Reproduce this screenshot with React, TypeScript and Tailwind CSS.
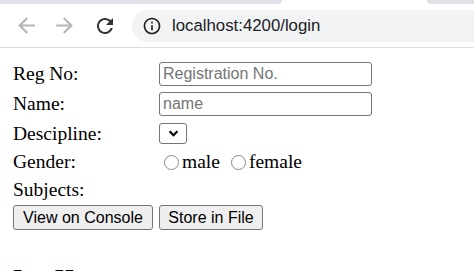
export default function App() {
  return (
    <div className="w-[474px] h-[271px] overflow-hidden bg-white">
      {/* tab strip */}
      <div className="flex h-[4px]">
        <div className="w-[282px] bg-[#dee1e6] rounded-br-[4px]" />
        <div className="w-[145px]" />
        <div className="flex-1 bg-[#dee1e6] rounded-bl-[4px]" />
      </div>

      {/* toolbar */}
      <div className="flex items-center h-[44px] border-b border-[#dadce0] pl-[14px] overflow-hidden">
        <svg viewBox="0 0 24 24" className="w-[25px] h-[25px] flex-none fill-[#b4b6b8]">
          <path d="M20 11H7.83l5.59-5.59L12 4l-8 8 8 8 1.41-1.41L7.83 13H20v-2z" />
        </svg>
        <svg viewBox="0 0 24 24" className="w-[25px] h-[25px] flex-none ml-[13px] fill-[#b4b6b8]">
          <path d="M4 11h12.17l-5.59-5.59L12 4l8 8-8 8-1.41-1.41L16.17 13H4v-2z" />
        </svg>
        <svg viewBox="0 0 24 24" className="w-[24px] h-[24px] flex-none ml-[16px] fill-[#303236]">
          <path d="M17.65 6.35C16.2 4.9 14.21 4 12 4c-4.42 0-7.99 3.58-7.99 8s3.57 8 7.99 8c3.73 0 6.84-2.55 7.730-6h-2.08c-.82 2.33-3.04 4-5.65 4-3.31 0-6-2.69-6-6s2.69-6 6-6c1.66 0 3.14.69 4.22 1.78L13 11h7V4l-2.35 2.35z" />
        </svg>
        <div className="flex items-center flex-none w-[360px] h-[32px] ml-[15px] rounded-full bg-[#f1f3f4] pl-[10px]">
          <svg viewBox="0 0 24 24" className="w-[20px] h-[20px] flex-none fill-[#202124]">
            <path d="M11 7h2v2h-2zm0 4h2v6h-2zm1-9C6.48 2 2 6.48 2 12s4.48 10 10 10 10-4.48 10-10S17.52 2 12 2zm0 18c-4.41 0-8-3.59-8-8s3.59-8 8-8 8 3.59 8 8-3.59 8-8 8z" />
          </svg>
          <span className="ml-[10px] text-[16.8px] text-[#202124] font-['Liberation_Sans',Arial,sans-serif]">
            localhost:4200/login
          </span>
        </div>
      </div>

      {/* page */}
      <div className="pl-[13px] pt-[14px] font-['Liberation_Serif','Times_New_Roman',serif] text-[19.5px] text-black leading-none">
        <div className="flex items-center h-[24px]">
          <span className="w-[146px]">Reg No:</span>
          <input
            placeholder="Registration No."
            className="w-[213px] h-[24px] px-[3px] border border-[#767676] rounded-[3px] text-[16px] font-['Liberation_Sans',Arial,sans-serif] placeholder:text-[#757575] outline-none"
          />
        </div>
        <div className="flex items-center h-[24px] mt-[6px]">
          <span className="w-[146px]">Name:</span>
          <input
            placeholder="name"
            className="w-[213px] h-[24px] px-[3px] border border-[#767676] rounded-[3px] text-[16px] font-['Liberation_Sans',Arial,sans-serif] placeholder:text-[#757575] outline-none"
          />
        </div>
        <div className="flex items-center h-[23px] mt-[6px]">
          <span className="w-[146px]">Descipline:</span>
          <div className="flex items-center justify-center w-[28px] h-[21px] border border-[#767676] rounded-[3px] bg-white">
            <svg viewBox="0 0 12 8" className="w-[11px] h-[7px]">
              <polyline points="1.5,1.5 6,6 10.5,1.5" fill="none" stroke="#000" strokeWidth="2.4" />
            </svg>
          </div>
        </div>
        <div className="flex items-center h-[22px] mt-[6px]">
          <span className="w-[151px]">Gender:</span>
          <span className="w-[15px] h-[15px] rounded-full border border-[#8a8a8a] bg-white" />
          <span className="ml-[3px]">male</span>
          <span className="w-[15px] h-[15px] rounded-full border border-[#8a8a8a] bg-white ml-[11px]" />
          <span className="ml-[3px]">female</span>
        </div>
        <div className="flex items-center h-[22px] mt-[6px]">
          <span>Subjects:</span>
        </div>
        <div className="flex items-center h-[25px] mt-[4px] gap-[6px] font-['Liberation_Sans',Arial,sans-serif] text-[16px]">
          <button className="w-[140px] h-[25px] border border-[#767676] rounded-[3px] bg-[#efefef] text-black">
            View on Console
          </button>
          <button className="w-[104px] h-[25px] border border-[#767676] rounded-[3px] bg-[#efefef] text-black">
            Store in File
          </button>
        </div>
        <h2 className="mt-[32px] text-[24px] font-bold leading-tight">Inn Homes</h2>
      </div>
    </div>
  )
}
